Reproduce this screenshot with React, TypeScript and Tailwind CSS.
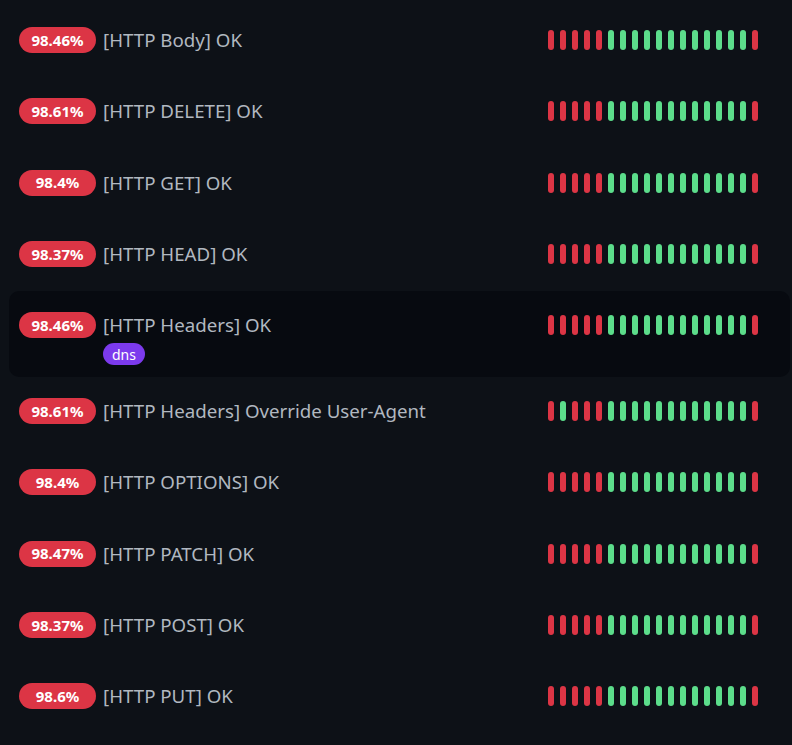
const DOWN = 0
const UP = 1

interface Monitor {
  uptime: string
  name: string
  tags?: { name: string; color: string }[]
  beats: number[]
  active?: boolean
}

const standard = [0, 0, 0, 0, 0, 1, 1, 1, 1, 1, 1, 1, 1, 1, 1, 1, 1, 0]

const monitors: Monitor[] = [
  { uptime: "98.46%", name: "[HTTP Body] OK", beats: standard },
  { uptime: "98.61%", name: "[HTTP DELETE] OK", beats: standard },
  { uptime: "98.4%", name: "[HTTP GET] OK", beats: standard },
  { uptime: "98.37%", name: "[HTTP HEAD] OK", beats: standard },
  {
    uptime: "98.46%",
    name: "[HTTP Headers] OK",
    beats: standard,
    tags: [{ name: "dns", color: "bg-[#7c3aed]" }],
    active: true,
  },
  {
    uptime: "98.61%",
    name: "[HTTP Headers] Override User-Agent",
    beats: [0, 1, 0, 0, 0, 1, 1, 1, 1, 1, 1, 1, 1, 1, 1, 1, 1, 0],
  },
  { uptime: "98.4%", name: "[HTTP OPTIONS] OK", beats: standard },
  { uptime: "98.47%", name: "[HTTP PATCH] OK", beats: standard },
  { uptime: "98.37%", name: "[HTTP POST] OK", beats: standard },
  { uptime: "98.6%", name: "[HTTP PUT] OK", beats: standard },
]

function HeartbeatBar({ beats }: { beats: number[] }) {
  return (
    <div className="flex h-[26px] items-center gap-[6px]">
      {beats.map((b, i) => (
        <div
          key={i}
          className={`h-[20px] w-[6px] rounded-full ${b === UP ? "bg-[#5cdd8b]" : b === DOWN ? "bg-[#dc3545]" : "bg-[#1f2937]"}`}
        />
      ))}
    </div>
  )
}

function MonitorItem({ monitor }: { monitor: Monitor }) {
  return (
    <div
      className={`flex min-h-[71.25px] items-start justify-between rounded-[10px] pb-[12px] pl-[10px] pr-[32px] pt-[21px] ${monitor.active ? "bg-[#070a10]" : ""}`}
    >
      <div className="flex flex-col">
        <div className="flex h-[26px] items-center gap-[7px]">
          <span className="flex h-[26px] w-[77px] items-center justify-center rounded-full bg-[#dc3545] text-[15px] font-bold text-white">
            {monitor.uptime}
          </span>
          <span className="text-[18.7px] leading-[26px] text-[#b1b8c0]">{monitor.name}</span>
        </div>
        {monitor.tags && (
          <div className="mt-[5px] flex gap-1 pl-[84px]">
            {monitor.tags.map(tag => (
              <span
                key={tag.name}
                className={`flex h-[22px] items-center rounded-full px-[9px] text-[14px] text-white ${tag.color}`}
              >
                {tag.name}
              </span>
            ))}
          </div>
        )}
      </div>
      <HeartbeatBar beats={monitor.beats} />
    </div>
  )
}

export default function App() {
  return (
    <div
      className="h-[745px] w-[792px] overflow-hidden bg-[#0d1117] pl-[9px] pr-[2px] pt-[6px]"
      style={{ fontFamily: '"Noto Sans", "Open Sans", sans-serif' }}
    >
      {/* monitor list */}
      <div className="flex flex-col">
        {monitors.map((m, idx) => (
          <MonitorItem key={idx} monitor={m} />
        ))}
      </div>
    </div>
  )
}
